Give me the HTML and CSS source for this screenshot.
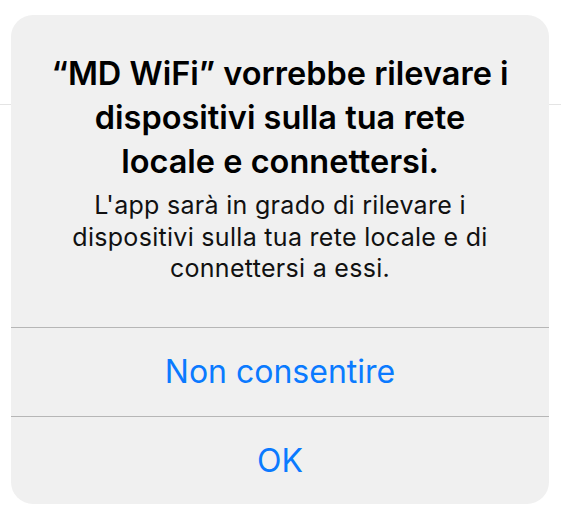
FILE: index.html
```html
<!DOCTYPE html>
<html>
<head>
    <meta charset="UTF-8">
    <title>Rete locale</title>
    <link rel="stylesheet" href="styles.css">
</head>
<body>
    <div class="page">
        <div class="page-header"></div>
    </div>

    <div class="alert">
        <div class="alert-body">
            <h2 class="alert-title">“MD WiFi” vorrebbe rilevare i<br>dispositivi sulla tua rete<br>locale e connettersi.</h2>
            <p class="alert-message">L'app sarà in grado di rilevare i<br>dispositivi sulla tua rete locale e di<br>connettersi a essi.</p>
        </div>
        <button class="alert-button">Non consentire</button>
        <button class="alert-button">OK</button>
    </div>
</body>
</html>
```

FILE: styles.css
```css
body {
    font-family: Inter, 'Noto Sans', sans-serif;
    background: #ffffff;
    margin: 0;
    min-height: 100vh;
}
.page-header {
    height: 104px;
    border-bottom: 1px solid #e4e4e4;
}
.alert {
    position: absolute;
    left: 11px;
    top: 15px;
    width: 538px;
    background: #f0f0f0;
    border-radius: 22px;
    overflow: hidden;
    display: flex;
    flex-direction: column;
}
.alert-body {
    padding: 37px 16px 42px;
    text-align: center;
}
.alert-title {
    margin: 0;
    font-size: 32.5px;
    font-weight: 600;
    line-height: 44px;
    color: #000;
}
.alert-message {
    margin: 6px 0 0;
    font-size: 25px;
    font-weight: 400;
    line-height: 31.5px;
    letter-spacing: 0.3px;
    color: #111;
}
.alert-button {
    height: 89px;
    border: none;
    border-top: 1px solid #b6b6b6;
    background: transparent;
    color: #0a7aff;
    font-family: inherit;
    font-size: 32px;
    padding: 0;
    cursor: pointer;
}
.alert-button:last-child {
    height: 88px;
}
```
